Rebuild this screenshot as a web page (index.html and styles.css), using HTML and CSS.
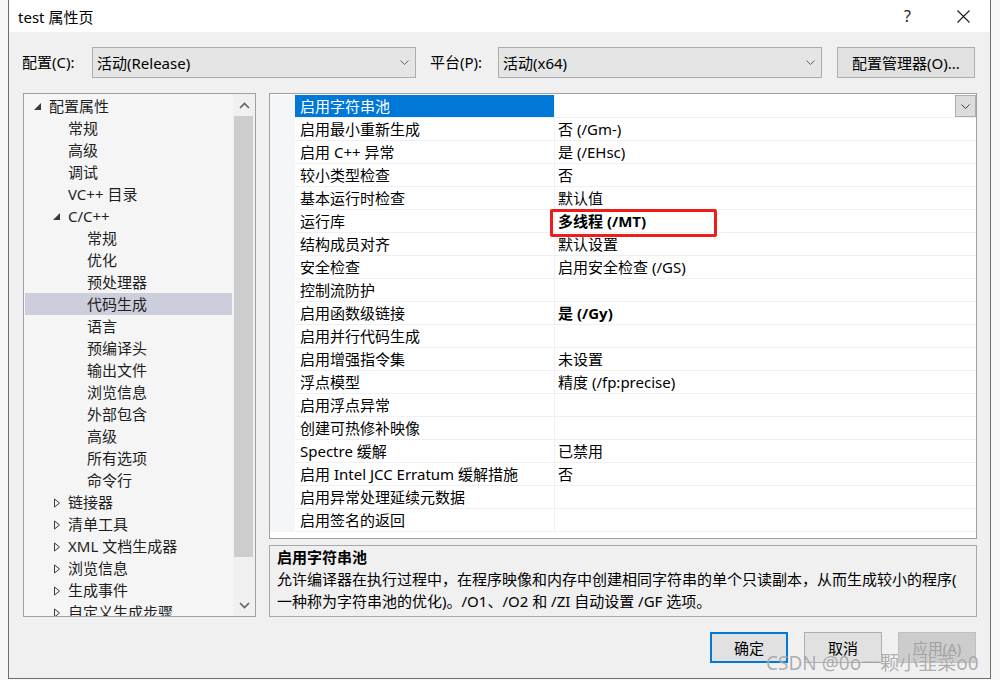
FILE: index.html
```html
<!DOCTYPE html>
<html lang="zh-CN">
<head>
<meta charset="utf-8">
<title>test 属性页</title>
<link rel="stylesheet" href="styles.css">
</head>
<body>
<div class="dialog">
  <div class="titlebar">
    <span class="title">test 属性页</span>
    <span class="help">?</span>
    <span class="close"><svg width="13" height="13" viewBox="0 0 13 13"><path d="M0.5 0.5 L12.5 12.5 M12.5 0.5 L0.5 12.5" stroke="#1a1a1a" stroke-width="1.1" fill="none"/></svg></span>
  </div>

  <div class="config">
    <span class="lbl lbl-cfg">配置(C):</span>
    <div class="combo"><span class="combo-text">活动(Release)</span><svg class="chev" width="9" height="5" viewBox="0 0 9 5"><path d="M0.5 0.5 L4.5 4.5 L8.5 0.5" fill="none" stroke="#606060"/></svg></div>
    <span class="lbl lbl-plat">平台(P):</span>
    <div class="combo"><span class="combo-text">活动(x64)</span><svg class="chev" width="9" height="5" viewBox="0 0 9 5"><path d="M0.5 0.5 L4.5 4.5 L8.5 0.5" fill="none" stroke="#606060"/></svg></div>
    <div class="btn cfgmgr">配置管理器(O)...</div>
  </div>

  <div class="main">
    <div class="tree">
      <div class="tree-rows">
        <div class="node l0"><span class="twisty"><svg width="8" height="8" viewBox="0 0 8 8"><path d="M7 0 V7 H0 Z" fill="#3a3a3a"/></svg></span>配置属性</div>
        <div class="node l1"><span class="twisty"></span>常规</div>
        <div class="node l1"><span class="twisty"></span>高级</div>
        <div class="node l1"><span class="twisty"></span>调试</div>
        <div class="node l1"><span class="twisty"></span>VC++ 目录</div>
        <div class="node l1"><span class="twisty"><svg width="8" height="8" viewBox="0 0 8 8"><path d="M7 0 V7 H0 Z" fill="#3a3a3a"/></svg></span>C/C++</div>
        <div class="node l2"><span class="twisty"></span>常规</div>
        <div class="node l2"><span class="twisty"></span>优化</div>
        <div class="node l2"><span class="twisty"></span>预处理器</div>
        <div class="node l2 selected"><span class="twisty"></span>代码生成</div>
        <div class="node l2"><span class="twisty"></span>语言</div>
        <div class="node l2"><span class="twisty"></span>预编译头</div>
        <div class="node l2"><span class="twisty"></span>输出文件</div>
        <div class="node l2"><span class="twisty"></span>浏览信息</div>
        <div class="node l2"><span class="twisty"></span>外部包含</div>
        <div class="node l2"><span class="twisty"></span>高级</div>
        <div class="node l2"><span class="twisty"></span>所有选项</div>
        <div class="node l2"><span class="twisty"></span>命令行</div>
        <div class="node l1"><span class="twisty"><svg width="8" height="10" viewBox="0 0 8 10"><path d="M1.5 1 L6.5 5 L1.5 9 Z" fill="none" stroke="#3a3a3a"/></svg></span>链接器</div>
        <div class="node l1"><span class="twisty"><svg width="8" height="10" viewBox="0 0 8 10"><path d="M1.5 1 L6.5 5 L1.5 9 Z" fill="none" stroke="#3a3a3a"/></svg></span>清单工具</div>
        <div class="node l1"><span class="twisty"><svg width="8" height="10" viewBox="0 0 8 10"><path d="M1.5 1 L6.5 5 L1.5 9 Z" fill="none" stroke="#3a3a3a"/></svg></span>XML 文档生成器</div>
        <div class="node l1"><span class="twisty"><svg width="8" height="10" viewBox="0 0 8 10"><path d="M1.5 1 L6.5 5 L1.5 9 Z" fill="none" stroke="#3a3a3a"/></svg></span>浏览信息</div>
        <div class="node l1"><span class="twisty"><svg width="8" height="10" viewBox="0 0 8 10"><path d="M1.5 1 L6.5 5 L1.5 9 Z" fill="none" stroke="#3a3a3a"/></svg></span>生成事件</div>
        <div class="node l1"><span class="twisty"><svg width="8" height="10" viewBox="0 0 8 10"><path d="M1.5 1 L6.5 5 L1.5 9 Z" fill="none" stroke="#3a3a3a"/></svg></span>自定义生成步骤</div>
      </div>
      <div class="vscroll">
        <div class="sb-btn"><svg width="11" height="7" viewBox="0 0 11 7"><path d="M1 6 L5.5 1.5 L10 6" stroke="#606060" stroke-width="1.6" fill="none"/></svg></div>
        <div class="sb-thumb"></div>
        <div class="sb-track"></div>
        <div class="sb-btn"><svg width="11" height="7" viewBox="0 0 11 7"><path d="M1 1 L5.5 5.5 L10 1" stroke="#606060" stroke-width="1.6" fill="none"/></svg></div>
      </div>
    </div>

    <div class="right">
      <div class="grid">
        <div class="row"><span class="gutter"></span><span class="name active">启用字符串池</span><span class="value"><span class="dd"><svg width="9" height="5" viewBox="0 0 9 5"><path d="M0.5 0.5 L4.5 4.5 L8.5 0.5" fill="none" stroke="#404040"/></svg></span></span></div>
        <div class="row"><span class="gutter"></span><span class="name">启用最小重新生成</span><span class="value">否 (/Gm-)</span></div>
        <div class="row"><span class="gutter"></span><span class="name">启用 C++ 异常</span><span class="value">是 (/EHsc)</span></div>
        <div class="row"><span class="gutter"></span><span class="name">较小类型检查</span><span class="value">否</span></div>
        <div class="row"><span class="gutter"></span><span class="name">基本运行时检查</span><span class="value">默认值</span></div>
        <div class="row"><span class="gutter"></span><span class="name">运行库</span><span class="value bold">多线程 (/MT)</span></div>
        <div class="row"><span class="gutter"></span><span class="name">结构成员对齐</span><span class="value">默认设置</span></div>
        <div class="row"><span class="gutter"></span><span class="name">安全检查</span><span class="value">启用安全检查 (/GS)</span></div>
        <div class="row"><span class="gutter"></span><span class="name">控制流防护</span><span class="value"></span></div>
        <div class="row"><span class="gutter"></span><span class="name">启用函数级链接</span><span class="value bold">是 (/Gy)</span></div>
        <div class="row"><span class="gutter"></span><span class="name">启用并行代码生成</span><span class="value"></span></div>
        <div class="row"><span class="gutter"></span><span class="name">启用增强指令集</span><span class="value">未设置</span></div>
        <div class="row"><span class="gutter"></span><span class="name">浮点模型</span><span class="value">精度 (/fp:precise)</span></div>
        <div class="row"><span class="gutter"></span><span class="name">启用浮点异常</span><span class="value"></span></div>
        <div class="row"><span class="gutter"></span><span class="name">创建可热修补映像</span><span class="value"></span></div>
        <div class="row"><span class="gutter"></span><span class="name">Spectre 缓解</span><span class="value">已禁用</span></div>
        <div class="row"><span class="gutter"></span><span class="name">启用 Intel JCC Erratum 缓解措施</span><span class="value">否</span></div>
        <div class="row"><span class="gutter"></span><span class="name">启用异常处理延续元数据</span><span class="value"></span></div>
        <div class="row"><span class="gutter"></span><span class="name">启用签名的返回</span><span class="value"></span></div>
        <div class="highlight"></div>
      </div>
      <div class="desc">
        <div class="desc-title">启用字符串池</div>
        <div class="desc-text">允许编译器在执行过程中，在程序映像和内存中创建相同字符串的单个只读副本，从而生成较小的程序(<br>一种称为字符串池的优化)。/O1、/O2 和 /ZI 自动设置 /GF 选项。</div>
      </div>
    </div>
  </div>

  <div class="buttons">
    <div class="btn dlg default">确定</div>
    <div class="btn dlg">取消</div>
    <div class="btn dlg disabled">应用(A)</div>
  </div>
</div>
<div class="watermark">CSDN @0o一颗小韭菜o0</div>
</body>
</html>
```

FILE: styles.css
```css
* { box-sizing: border-box; }

html, body {
  margin: 0;
  padding: 0;
}

body {
  width: 1000px;
  height: 680px;
  overflow: hidden;
  background: #f7f7f7;
  font-family: "Noto Sans", "Noto Sans CJK SC", sans-serif;
  font-size: 15px;
  color: #000;
  position: relative;
}

.dialog {
  margin-left: 8px;
  width: 983px;
  height: 679px;
  background: #f0f0f0;
  border: 1px solid #6e6e6e;
  border-top: none;
  display: flex;
  flex-direction: column;
}

/* title bar */
.titlebar {
  height: 32px;
  background: #fff;
  display: flex;
  align-items: center;
  padding-left: 9px;
  padding-right: 20px;
  flex-shrink: 0;
}
.title { font-size: 15px; color: #000; }
.help { margin-left: auto; font-size: 16px; color: #222; }
.close { margin-left: 46px; display: flex; }

/* config row */
.config {
  height: 61px;
  display: flex;
  align-items: flex-start;
  padding-top: 15px;
  padding-left: 13px;
  flex-shrink: 0;
}
.lbl {
  height: 31px;
  line-height: 31px;
  white-space: nowrap;
}
.lbl-cfg { width: 70px; }
.lbl-plat { width: 68px; margin-left: 14px; }
.combo {
  width: 324px;
  height: 31px;
  background: #e5e5e5;
  border: 1px solid #adadad;
  display: flex;
  align-items: center;
  padding-left: 4px;
  padding-right: 6px;
}
.combo-text { flex: 1; }
.btn {
  background: #e1e1e1;
  border: 1px solid #adadad;
  display: flex;
  align-items: center;
  justify-content: center;
  white-space: nowrap;
}
.cfgmgr {
  width: 138px;
  height: 31px;
  margin-left: 15px;
}

/* main */
.main {
  display: flex;
  padding-left: 14px;
  height: 524px;
  flex-shrink: 0;
}

.tree {
  width: 233px;
  height: 524px;
  border: 1px solid #a0a0a0;
  background: #f5f5f5;
  display: flex;
  overflow: hidden;
}
.tree-rows {
  width: 209px;
  padding-top: 1px;
  overflow: hidden;
}
.node {
  height: 22px;
  line-height: 22px;
  display: flex;
  align-items: center;
  color: #1e1e1e;
  white-space: nowrap;
  margin: 0 1px;
}
.node.l0 { padding-left: 9px; }
.node.l1 { padding-left: 28px; }
.node.l2 { padding-left: 47px; }
.node.selected { background: #cccedb; }
.twisty {
  width: 15px;
  flex-shrink: 0;
  display: flex;
  align-items: center;
  padding-top: 2px;
}

.vscroll {
  width: 22px;
  display: flex;
  flex-direction: column;
  background: #f0f0f0;
}
.sb-btn {
  height: 22px;
  display: flex;
  align-items: center;
  justify-content: center;
  flex-shrink: 0;
}
.sb-thumb {
  height: 441px;
  margin: 0 2px 0 1px;
  background: #cdcdcd;
  flex-shrink: 0;
}
.sb-track { flex: 1; }

.right {
  margin-left: 13px;
  width: 708px;
  display: flex;
  flex-direction: column;
  gap: 6px;
}

.grid {
  height: 446px;
  border: 1px solid #a0a0a0;
  background: #fff;
  padding-top: 1px;
  position: relative;
  overflow: hidden;
}
.row {
  display: flex;
  height: 23px;
}
.gutter {
  width: 25px;
  background: #f5f6f8;
  flex-shrink: 0;
}
.name {
  width: 260px;
  flex-shrink: 0;
  padding-left: 5px;
  line-height: 22px;
  border-bottom: 1px solid #f0f0f4;
  border-right: 1px solid #f0f0f4;
  white-space: nowrap;
}
.name.active {
  background: #0078d7;
  color: #fff;
}
.value {
  flex: 1;
  padding-left: 3px;
  line-height: 22px;
  border-bottom: 1px solid #f0f0f4;
  display: flex;
  white-space: nowrap;
}
.value.bold { font-weight: 700; }
.dd {
  margin-left: auto;
  width: 21px;
  height: 22px;
  background: #dcdcdc;
  border: 1px solid #adadad;
  display: flex;
  align-items: center;
  justify-content: center;
}

.highlight {
  position: absolute;
  left: 280px;
  top: 115px;
  width: 167px;
  height: 28px;
  border: 3px solid #f01c1c;
  border-radius: 2px;
}

.desc {
  height: 72px;
  border: 1px solid #a8a8a8;
  background: #f0f0f0;
  padding-left: 7px;
  line-height: 22px;
}
.desc-title { font-weight: 700; }
.desc-text { white-space: nowrap; }

/* buttons */
.buttons {
  display: flex;
  justify-content: flex-end;
  gap: 16px;
  padding-right: 14px;
  margin-top: 15px;
}
.dlg {
  width: 78px;
  height: 31px;
}
.dlg.default {
  border: 2px solid #0078d7;
}
.dlg.disabled {
  background: #cccccc;
  border-color: #bfbfbf;
  color: #a0a0a0;
}

.watermark {
  position: absolute;
  left: 766px;
  top: 648px;
  font-size: 19px;
  color: rgba(105, 105, 105, 0.55);
  text-shadow: 0 0 1px rgba(255,255,255,0.8);
  white-space: nowrap;
}
```
